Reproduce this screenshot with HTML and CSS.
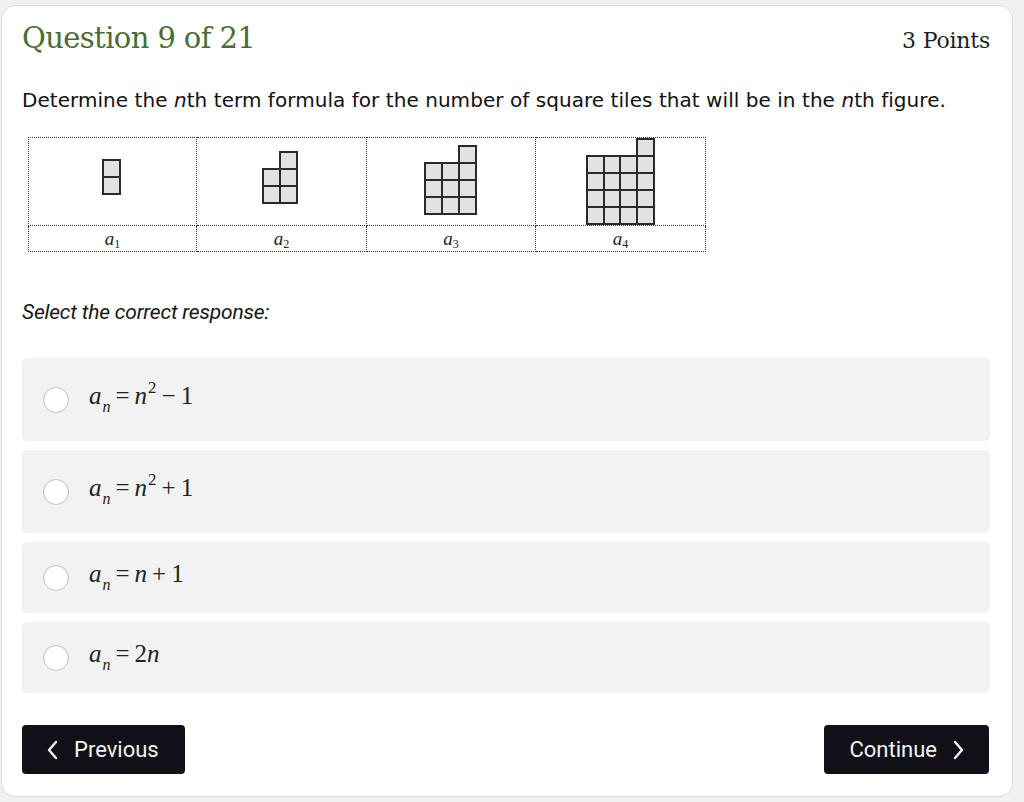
FILE: index.html
```html
<!DOCTYPE html>
<html lang="en">
<head>
<meta charset="utf-8">
<title>Question 9 of 21</title>
<link rel="stylesheet" href="styles.css">
</head>
<body>
<div class="card">
  <header class="head">
    <h1 class="title">Question 9 of 21</h1>
    <div class="points">3 Points</div>
  </header>

  <p class="prompt">Determine the <i>n</i>th term formula for the number of square tiles that will be in the <i>n</i>th figure.</p>

  <table class="figs">
    <colgroup>
      <col class="c1"><col class="c2"><col class="c3"><col class="c4">
    </colgroup>
    <tr class="fig-row">
      <td>
        <svg class="fig" width="168" height="87" viewBox="0 0 168 87">
          <g class="tiles">
            <rect x="74" y="22" width="17" height="17"/>
            <rect x="74" y="39" width="17" height="17"/>
          </g>
        </svg>
      </td>
      <td>
        <svg class="fig" width="169" height="87" viewBox="0 0 169 87">
          <g class="tiles">
            <rect x="83" y="14" width="17" height="17"/>
            <rect x="66" y="31" width="17" height="17"/>
            <rect x="83" y="31" width="17" height="17"/>
            <rect x="66" y="48" width="17" height="17"/>
            <rect x="83" y="48" width="17" height="17"/>
          </g>
        </svg>
      </td>
      <td>
        <svg class="fig" width="168" height="87" viewBox="0 0 168 87">
          <g class="tiles">
            <rect x="92" y="8" width="17" height="17"/>
            <rect x="58" y="25" width="17" height="17"/>
            <rect x="75" y="25" width="17" height="17"/>
            <rect x="92" y="25" width="17" height="17"/>
            <rect x="58" y="42" width="17" height="17"/>
            <rect x="75" y="42" width="17" height="17"/>
            <rect x="92" y="42" width="17" height="17"/>
            <rect x="58" y="59" width="17" height="17"/>
            <rect x="75" y="59" width="17" height="17"/>
            <rect x="92" y="59" width="17" height="17"/>
          </g>
        </svg>
      </td>
      <td>
        <svg class="fig" width="169" height="87" viewBox="0 0 169 87">
          <g class="tiles">
            <rect x="101" y="1" width="17" height="17"/>
            <rect x="51" y="18" width="17" height="17"/>
            <rect x="68" y="18" width="17" height="17"/>
            <rect x="84" y="18" width="17" height="17"/>
            <rect x="101" y="18" width="17" height="17"/>
            <rect x="51" y="35" width="17" height="17"/>
            <rect x="68" y="35" width="17" height="17"/>
            <rect x="84" y="35" width="17" height="17"/>
            <rect x="101" y="35" width="17" height="17"/>
            <rect x="51" y="52" width="17" height="17"/>
            <rect x="68" y="52" width="17" height="17"/>
            <rect x="84" y="52" width="17" height="17"/>
            <rect x="101" y="52" width="17" height="17"/>
            <rect x="51" y="69" width="17" height="17"/>
            <rect x="68" y="69" width="17" height="17"/>
            <rect x="84" y="69" width="17" height="17"/>
            <rect x="101" y="69" width="17" height="17"/>
          </g>
        </svg>
      </td>
    </tr>
    <tr class="label-row">
      <td><i>a</i><sub>1</sub></td>
      <td><i>a</i><sub>2</sub></td>
      <td><i>a</i><sub>3</sub></td>
      <td><i>a</i><sub>4</sub></td>
    </tr>
  </table>

  <p class="instruction">Select the correct response:</p>

  <div class="options">
    <label class="option tall">
      <span class="radio"></span>
      <span class="math"><i>a</i><sub class="sub"><i>n</i></sub><span class="op">=</span><i>n</i><sup>2</sup><span class="op">&minus;</span>1</span>
    </label>
    <label class="option tall">
      <span class="radio"></span>
      <span class="math"><i>a</i><sub class="sub"><i>n</i></sub><span class="op">=</span><i>n</i><sup>2</sup><span class="op">+</span>1</span>
    </label>
    <label class="option">
      <span class="radio"></span>
      <span class="math"><i>a</i><sub class="sub"><i>n</i></sub><span class="op">=</span><i>n</i><span class="op">+</span>1</span>
    </label>
    <label class="option">
      <span class="radio"></span>
      <span class="math"><i>a</i><sub class="sub"><i>n</i></sub><span class="op">=</span>2<i>n</i></span>
    </label>
  </div>

  <footer class="nav">
    <button class="btn btn-prev">
      <svg class="chev" width="12" height="20" viewBox="0 0 12 20"><path d="M10 2 L3 10 L10 18"/></svg>
      <span>Previous</span>
    </button>
    <button class="btn btn-next">
      <span>Continue</span>
      <svg class="chev" width="12" height="20" viewBox="0 0 12 20"><path d="M2 2 L9 10 L2 18"/></svg>
    </button>
  </footer>
</div>
</body>
</html>
```

FILE: styles.css
```css
html, body {
  margin: 0;
  padding: 0;
}
body {
  background: #f1f1f1;
  width: 1024px;
  height: 802px;
  overflow: hidden;
}
.card {
  box-sizing: border-box;
  margin: 5px 0 0 1px;
  width: 1012px;
  height: 792px;
  background: #fff;
  border: 1px solid #dcdcdc;
  border-radius: 14px;
  padding: 0 22px 0 20px;
  display: flex;
  flex-direction: column;
  align-items: stretch;
}
.head {
  display: flex;
  justify-content: space-between;
  align-items: baseline;
  height: 62px;
  padding-top: 15px;
  box-sizing: border-box;
}
.title {
  margin: 0;
  font-family: "DejaVu Serif", serif;
  font-weight: normal;
  font-size: 29px;
  color: #4a6b34;
  letter-spacing: -0.6px;
}
.points {
  font-family: "DejaVu Serif", serif;
  font-size: 22px;
  color: #1e1e1e;
  letter-spacing: -0.2px;
}
.prompt {
  margin: 19px 0 0 0;
  font-family: "DejaVu Sans", sans-serif;
  font-size: 20px;
  line-height: 26px;
  color: #111;
  letter-spacing: 0.05px;
}
.prompt i {
  font-family: "DejaVu Sans", sans-serif;
}
.figs {
  align-self: flex-start;
  margin: 24px 0 0 6px;
  border-collapse: collapse;
  table-layout: fixed;
  width: 677px;
  font-family: "Liberation Serif", serif;
}
.c1 { width: 168px; }
.c2 { width: 170px; }
.c3 { width: 169px; }
.c4 { width: 170px; }
.figs td {
  border: 1px dotted #333;
  padding: 0;
  text-align: center;
}
.fig {
  display: block;
  margin: 0 auto;
}
.tiles rect {
  fill: #e2e2e2;
  stroke: #2a2a2a;
  stroke-width: 2;
}
.label-row td {
  height: 25px;
  font-size: 19px;
  color: #222;
  line-height: 20px;
}
.label-row sub {
  font-size: 12px;
  line-height: 0;
  vertical-align: -3px;
}
.instruction {
  margin: 46px 0 0 0;
  font-family: Roboto, sans-serif;
  font-style: italic;
  font-size: 21px;
  line-height: 28px;
  color: #151515;
  letter-spacing: -0.2px;
}
.options {
  margin-top: 32px;
  display: flex;
  flex-direction: column;
  gap: 9px;
}
.option {
  box-sizing: border-box;
  display: flex;
  align-items: center;
  gap: 20px;
  background: #f2f2f2;
  border-radius: 5px;
  padding: 0 21px;
  height: 71px;
}
.option.tall {
  height: 83px;
}
.radio {
  width: 26px;
  height: 26px;
  box-sizing: border-box;
  border: 1.5px solid #bdbdbd;
  border-radius: 50%;
  background: #fff;
  flex: none;
}
.math {
  display: block;
  position: relative;
  top: -4px;
  font-family: "Liberation Serif", serif;
  font-size: 25px;
  line-height: 25px;
  color: #222;
  white-space: nowrap;
}
.math sub.sub {
  font-size: 16px;
  line-height: 0;
  position: relative;
  top: 8px;
  vertical-align: baseline;
  margin-left: 1px;
}
.math sup {
  font-size: 17px;
  line-height: 0;
  position: relative;
  top: -11px;
  margin-left: 1px;
  vertical-align: baseline;
}
.op {
  margin: 0 5px;
}
.nav {
  margin-top: auto;
  margin-bottom: 22px;
  display: flex;
  justify-content: space-between;
}
.btn {
  display: flex;
  align-items: center;
  gap: 16px;
  height: 49px;
  background: #111018;
  color: #f4f4ef;
  border: 0;
  border-radius: 4px;
  font-family: Roboto, sans-serif;
  font-size: 22px;
}
.btn-prev {
  padding: 0 26px 0 24px;
}
.btn-next {
  padding: 0 24px 0 25px;
  margin-right: 1px;
}
.chev path {
  fill: none;
  stroke: #f4f4ef;
  stroke-width: 2.4;
  stroke-linecap: round;
  stroke-linejoin: round;
}
```
